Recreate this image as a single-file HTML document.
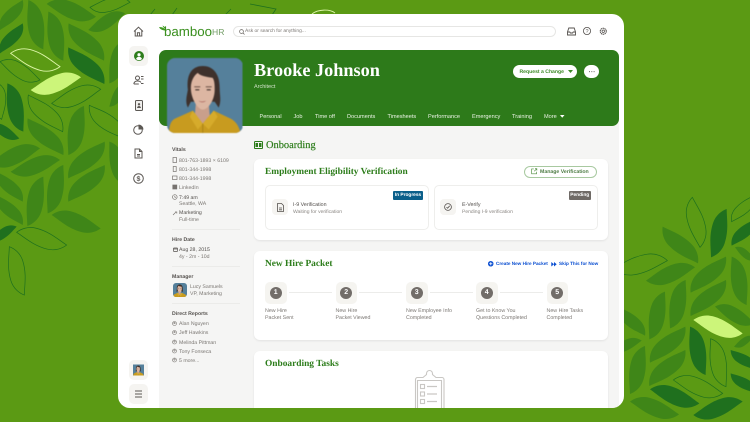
<!DOCTYPE html>
<html lang="en"><head><meta charset="utf-8"><title>BambooHR Onboarding</title>
<style>
html,body{margin:0;padding:0}
body{width:750px;height:422px;overflow:hidden;position:relative;background:#5b9a14;font-family:"Liberation Sans",sans-serif;text-rendering:geometricPrecision}
#w{position:absolute;left:0;top:0;width:750px;height:422px;filter:blur(.25px)}
.a,.t{position:absolute}
.t{white-space:nowrap;height:8px;line-height:8px;font-size:5.2px;color:#7d7975;margin-top:.5px}
.b{font-weight:bold}
.h{color:#55514e;font-weight:bold;font-size:5.2px}
.s{font-family:"Liberation Serif",serif;font-weight:bold;color:#2d7d1b}
.tab{color:#e9f2e3;font-size:5.6px;top:112.5px}
.card{position:absolute;left:254px;width:353.5px;background:#fff;border-radius:6px;box-shadow:0 1px 2px rgba(0,0,0,.08)}
.sub{position:absolute;top:185px;width:162px;height:43px;background:#fff;border:1px solid #eeeeec;border-radius:5px}
.ib{position:absolute;background:#f5f4f1;border-radius:4px}
.step{position:absolute;top:282px;width:21.5px;height:22px;background:#f5f4f0;border-radius:5px}
.step i{position:absolute;left:4.7px;top:5px;width:12px;height:12px;border-radius:50%;background:#726d69;color:#fff;font:bold 7px/12px "Liberation Sans",sans-serif;text-align:center}
.ln{position:absolute;top:292px;height:1px;width:43px;background:#ececea}
.dv{position:absolute;left:172px;width:68px;height:1px;background:#ebebe9}
svg{position:absolute;overflow:visible}
.ic{fill:none;stroke:#5c5854;stroke-width:1}
#f{vector-effect:non-scaling-stroke}
.m{fill:#3f8618}.d{fill:#1f701e}.l{fill:#ccf57a}
.o{fill:none;stroke:#1f701e;stroke-width:.7}
.c{fill:none;stroke:#dcf5a8;stroke-width:.9}
</style></head><body><div id="w">

<svg style="left:0;top:0" width="750" height="422" viewBox="0 0 750 422">
<defs>
<path id="f" d="M0 0C.18-.06.38-.17.65-.17.82-.17.94-.08 1 0 .82.06.62.17.35.17.18.17.06.08 0 0Z"/>
<symbol id="p" viewBox="0 0 76 76">
<rect width="76" height="76" fill="#55809b"/>
<path d="M21 32C19 14 27 8 36 8s17 6 17 22c0 8 2 13-1 20l-4-6-24 0-3 6c-3-6-1-12 0-18Z" fill="#3e312c"/>
<path d="M29 46h13l1 12-7 8-8-8Z" fill="#c99f8b"/>
<path d="M24 30C24 22 28 17 31 15c2 3 9 4 15 5 2 3 2 8 2 12 0 11-7 20-12 20S24 41 24 30Z" fill="#dcb6a2"/>
<path d="M27.5 29h6M39 29h6" stroke="#5a4338" stroke-width=".8"/>
<path d="M28.5 32h4M40 32h4" stroke="#3a2c27" stroke-width="1.2"/>
<path d="M31.5 43c2 1 5 1 8 0-2 2-6 2-8 0Z" fill="#a8605a"/>
<path d="M2 76C2 68 4 63 8 61l18-8 10 13 11-13 17 8c6 3 9 9 10 15Z" fill="#c89b1f"/>
<path d="M26 53l10 13-5 6-8-13ZM47 53 36 66l6 6 9-13Z" fill="#d6ab2b"/>
<path d="M36 66v10" stroke="#9f7a14" stroke-width=".7"/>
</symbol>
</defs>

<g transform="scale(.33333)">
<use href="#f" class="m" transform="matrix(68 -90 -90 -68 0 90)"/>
<use href="#f" class="m" transform="matrix(45 148 148 -45 85 0)"/>
<use href="#f" class="m" transform="matrix(45 147 147 -45 145 35)"/>
<use href="#f" class="m" transform="matrix(148 38 38 -148 140 12)"/>
<use href="#f" class="m" transform="matrix(106 112 -112 106 206 70)"/>
<use href="#f" class="m" transform="matrix(110 -50 50 110 265 90)"/>
<use href="#f" class="d" transform="matrix(68 -90 -90 -68 0 160)"/>
<use href="#f" class="d" transform="matrix(108 110 -110 108 205 142)"/>
<use href="#f" class="c" transform="matrix(148 40 40 -148 32 160)"/>
<use href="#f" class="o" transform="matrix(120 55 55 -120 0 185)"/>
<use href="#f" class="l" transform="matrix(151 -38 38 151 92 270)"/>
<use href="#f" class="o" transform="matrix(147 -42 42 147 155 310)"/>
<use href="#f" class="d" transform="matrix(48 145 145 -48 22 250)"/>
<use href="#f" class="o" transform="matrix(103 110 -110 103 85 285)"/>
<use href="#f" class="o" transform="matrix(105 100 -100 105 268 316)"/>
<use href="#f" class="m" transform="matrix(107 110 -110 107 83 355)"/>
<use href="#f" class="m" transform="matrix(47 -147 147 47 205 465)"/>
<use href="#f" class="m" transform="matrix(109 -110 -110 -109 205 535)"/>
<use href="#f" class="m" transform="matrix(109 -110 -110 -109 205 605)"/>
<use href="#f" class="m" transform="matrix(48 -130 130 48 328 250)"/>
<use href="#f" class="m" transform="matrix(48 130 130 -48 328 425)"/>
<use href="#f" class="m" transform="matrix(50 -70 70 50 328 320)"/>
<use href="#f" class="d" transform="matrix(88 40 40 -88 -30 375)"/>
<use href="#f" class="m" transform="matrix(150 -45 45 150 -30 490)"/>
<use href="#f" class="m" transform="matrix(148 -35 35 148 32 515)"/>
<use href="#f" class="m" transform="matrix(78 90 -90 78 -10 515)"/>
<use href="#f" class="m" transform="matrix(78 90 -90 78 -10 585)"/>
<use href="#f" class="m" transform="matrix(48 -148 148 48 82 678)"/>
<use href="#f" class="m" transform="matrix(47 -145 145 47 143 640)"/>
<use href="#f" class="m" transform="matrix(147 40 40 -147 155 645)"/>
<use href="#f" class="d" transform="matrix(80 -40 40 80 -30 720)"/>
<use href="#f" class="o" transform="matrix(150 38 38 -150 50 697)"/>
<use href="#f" class="o" transform="matrix(45 145 145 -45 28 740)"/>
<use href="#f" class="o" transform="matrix(120 -15 15 120 270 22)"/>
<use href="#f" class="o" transform="matrix(10 108 108 -10 -5 250)"/>
</g>

<g transform="translate(610 150) scale(.33333)">
<use href="#f" class="o" transform="matrix(23 150 -150 23 247 142)"/>
<use href="#f" class="d" transform="matrix(47 -145 145 47 303 322)"/>
<use href="#f" class="o" transform="matrix(70 -80 -80 -70 365 215)"/>
<use href="#f" class="d" transform="matrix(75 -82 -82 -75 365 287)"/>
<use href="#f" class="m" transform="matrix(106 110 -110 106 158 230)"/>
<use href="#f" class="o" transform="matrix(162 -23 23 162 10 355)"/>
<use href="#f" class="m" transform="matrix(147 -40 40 147 108 392)"/>
<use href="#f" class="m" transform="matrix(106 -108 -108 -106 242 428)"/>
<use href="#f" class="m" transform="matrix(106 -108 -108 -106 242 498)"/>
<use href="#f" class="m" transform="matrix(45 145 145 -45 365 320)"/>
<use href="#f" class="m" transform="matrix(47 -145 145 47 180 535)"/>
<use href="#f" class="m" transform="matrix(47 -143 143 47 118 568)"/>
<use href="#f" class="m" transform="matrix(106 -108 -108 -106 120 638)"/>
<use href="#f" class="m" transform="matrix(108 -108 -108 -108 118 708)"/>
<use href="#f" class="m" transform="matrix(80 87 -87 80 25 470)"/>
<use href="#f" class="m" transform="matrix(95 -28 28 95 0 600)"/>
<use href="#f" class="m" transform="matrix(45 -144 144 45 60 732)"/>
<use href="#f" class="m" transform="matrix(120 50 50 -120 315 470)"/>
<use href="#f" class="m" transform="matrix(60 -30 30 60 372 590)"/>
<use href="#f" class="m" transform="matrix(60 38 38 -60 375 292)"/>
<use href="#f" class="l" transform="matrix(148 40 40 -148 250 510)"/>
<use href="#f" class="d" transform="matrix(47 145 145 -47 240 530)"/>
<use href="#f" class="o" transform="matrix(46 144 144 -46 302 566)"/>
<use href="#f" class="d" transform="matrix(80 60 -60 80 362 600)"/>
<use href="#f" class="d" transform="matrix(80 60 -60 80 362 670)"/>
<use href="#f" class="o" transform="matrix(148 40 40 -148 190 690)"/>
<use href="#f" class="d" transform="matrix(148 42 42 -148 120 718)"/>
<use href="#f" class="m" transform="matrix(147 38 38 -147 60 755)"/>
<use href="#f" class="d" transform="matrix(148 -40 40 148 250 795)"/>
</g>
<path d="M250 4 276 9 272 15" fill="none" stroke="#1f701e" stroke-width=".8"/>
<path d="M312 14C318 9 330 9 335 13" fill="none" stroke="#dcf5a8" stroke-width=".9"/>
<path d="M150 15 155 9M172 15 177 8M225 15 231 9" fill="none" stroke="#1f701e" stroke-width=".7"/>
</svg>

<!-- app window -->
<div class="a" style="left:118px;top:13.5px;width:506px;height:394.5px;background:#fff;border-radius:12px;overflow:hidden">
  <div class="a" style="left:41px;top:100px;width:460px;height:295px;background:#f5f5f4"></div>
</div>

<!-- sidebar icons -->
<svg style="left:133px;top:26px" width="11" height="11" viewBox="0 0 11 11" class="ic"><path d="M1 5.5 5.5 1.2 10 5.5M2.2 4.6V10h6.6V4.6M4.4 10V6.8h2.2V10"/></svg>
<div class="ib" style="left:129px;top:46px;width:19px;height:20px;border-radius:5px"></div>
<svg style="left:133.5px;top:51px" width="10" height="10" viewBox="0 0 10 10"><circle cx="5" cy="5" r="5" fill="#2d7d1b"/><circle cx="5" cy="3.7" r="1.6" fill="#fff"/><path d="M2 8c.7-1.6 1.8-2.2 3-2.2S7.3 6.4 8 8a4.3 4.3 0 0 1-6 0Z" fill="#fff"/></svg>
<svg style="left:133px;top:75px" width="11" height="10" viewBox="0 0 11 10" class="ic"><circle cx="4.5" cy="3" r="2"/><path d="M.8 9c.3-2.2 1.8-3 3.7-3s3 .6 3.4 1.5M.8 9h5"/><path d="M8 1.5h2.5M8 4h2.5M8 8.5h2.5" stroke-width="1.1"/></svg>
<svg style="left:134.5px;top:99.5px" width="8" height="11" viewBox="0 0 8 11"><rect x=".5" y=".5" width="7" height="10" rx="1" fill="#f0efed" stroke="#5c5854"/><circle cx="4" cy="4.3" r="1.2" fill="#5c5854"/><path d="M2 8c.3-1.500 1-2 2-2s1.700.5 2 2Z" fill="#5c5854"/></svg>
<svg style="left:133px;top:124px" width="11" height="11" viewBox="0 0 11 11"><circle cx="5" cy="6" r="4.3" fill="none" stroke="#5c5854"/><path d="M5.5 .5a5 5 0 0 1 5 5h-5Z" fill="#5c5854"/></svg>
<svg style="left:134px;top:148px" width="9" height="11" viewBox="0 0 9 11" class="ic"><path d="M1 1h4.5L8 3.5V10H1ZM5.5 1v2.5H8M3 6.5h3M3 8h3"/></svg>
<svg style="left:133px;top:173px" width="11" height="11" viewBox="0 0 11 11"><circle cx="5.5" cy="5.5" r="4.8" fill="none" stroke="#5c5854"/><text x="5.5" y="8" font-size="7" font-weight="bold" text-anchor="middle" fill="#5c5854" font-family="Liberation Sans">$</text></svg>
<div class="ib" style="left:129px;top:360px;width:19px;height:20px;border-radius:5px"></div>
<svg style="left:133px;top:364px;border-radius:2px" width="11" height="12"><use href="#p" width="11" height="12"/></svg>
<div class="ib" style="left:129px;top:384px;width:19px;height:20px;border-radius:5px"></div>
<svg style="left:134px;top:390px" width="9" height="8" viewBox="0 0 9 8"><path d="M1 1h7M1 4h7M1 7h7" stroke="#5c5854" stroke-width="1"/></svg>

<!-- logo -->
<svg style="left:159px;top:25px" width="12" height="10" viewBox="0 0 12 10"><path d="M0 2.2C3 1.800 5.500 3 7 5.500 4.200 5.500 1.500 4.700 0 2.200Z" fill="#3f9a1f"/><path d="M3.500.5C5 1.200 6.300 2.300 7 4.200 5.500 3.500 4 2.300 3.500.5Z" fill="#3f9a1f"/></svg>
<div class="t" style="left:164px;top:25px;height:12px;line-height:12px;font-size:13.3px;color:#3a8f1f">bamboo</div>
<div class="t" style="left:212px;top:27.5px;height:9px;line-height:9px;font-size:8.6px;color:#6f9a62">HR</div>

<!-- search -->
<div class="a" style="left:233px;top:26px;width:323px;height:11px;box-sizing:border-box;border:1px solid #e6e6e4;border-radius:6px;background:#fff"></div>
<svg style="left:238.5px;top:28.5px" width="6" height="6" viewBox="0 0 6 6" fill="none" stroke="#66625e" stroke-width=".7"><circle cx="2.5" cy="2.5" r="1.9"/><path d="M4 4 5.5 5.5"/></svg>
<div class="t" style="left:245px;top:27.5px;font-size:4.9px;color:#7d7975">Ask or search for anything...</div>

<!-- top right icons -->
<svg style="left:567px;top:26.5px" width="9" height="9" viewBox="0 0 9 9" fill="none" stroke="#55514e" stroke-width=".9"><path d="M1.8 1h5.400l1.300 4v3H.5V5ZM.5 5h2.300l.6 1h2.200l.6-1h2.300"/></svg>
<svg style="left:583px;top:27px" width="8" height="8" viewBox="0 0 8 8"><circle cx="4" cy="4" r="3.6" fill="none" stroke="#55514e" stroke-width=".8"/><text x="4" y="6" font-size="5.5" text-anchor="middle" fill="#55514e" font-family="Liberation Sans">?</text></svg>
<svg style="left:599px;top:27px" width="8.5" height="8.5" viewBox="0 0 9 9" fill="none" stroke="#55514e"><circle cx="4.5" cy="4.5" r="1.3" stroke-width=".8"/><circle cx="4.5" cy="4.5" r="3.2" stroke-width="1.1" stroke-dasharray="1.5 .5"/></svg>

<!-- profile header -->
<div class="a" style="left:159px;top:50px;width:460px;height:75.5px;background:#2d7a1a;border-radius:7px"></div>
<svg style="left:167.3px;top:57.7px;border-radius:8px;overflow:hidden;filter:blur(.4px)" width="75.5" height="75.5"><use href="#p" width="75.5" height="75.5"/></svg>
<div class="t s" style="left:254px;top:57.5px;height:24px;line-height:24px;font-size:18.25px;color:#fff">Brooke Johnson</div>
<div class="t" style="left:254px;top:82.5px;font-size:5.5px;color:#d3e3cb">Architect</div>
<div class="a" style="left:513px;top:64.5px;width:64px;height:13px;background:#fff;border-radius:7px"></div>
<div class="t b" style="left:519.5px;top:67px;font-size:5.1px;color:#3c8a26">Request a Change</div>
<svg style="left:568px;top:69.5px" width="5" height="3" viewBox="0 0 5 3"><path d="M0 0h5L2.5 3Z" fill="#3c8a26"/></svg>
<div class="a" style="left:583.5px;top:64.5px;width:15.5px;height:13px;background:#fff;border-radius:7px"></div>
<svg style="left:588.5px;top:70.5px" width="6" height="1.5" viewBox="0 0 6 1.5"><path d="M0 .7h1M2.3 .7h1M4.600 .7h1" stroke="#55514e" stroke-width=".8"/></svg>
<div class="t tab" style="left:259.5px">Personal</div>
<div class="t tab" style="left:293.5px">Job</div>
<div class="t tab" style="left:315px">Time off</div>
<div class="t tab" style="left:347px">Documents</div>
<div class="t tab" style="left:387.5px">Timesheets</div>
<div class="t tab" style="left:428px">Performance</div>
<div class="t tab" style="left:472px">Emergency</div>
<div class="t tab" style="left:512px">Training</div>
<div class="t tab" style="left:544px">More</div>
<svg style="left:560px;top:115px" width="4.5" height="2.7" viewBox="0 0 5 3"><path d="M0 0h5L2.5 3Z" fill="#fff"/></svg>

<!-- left info column -->
<div class="t h" style="left:172px;top:145px">Vitals</div>
<div class="t" style="left:179px;top:156px">801-763-1893 × 6109</div>
<div class="t" style="left:179px;top:165px">801-344-1998</div>
<div class="t" style="left:179px;top:174px">801-344-1998</div>
<div class="t" style="left:179px;top:183.5px">LinkedIn</div>
<div class="t" style="left:179px;top:193px;color:#55514e">7:49 am</div>
<div class="t" style="left:179px;top:199px">Seattle, WA</div>
<div class="t" style="left:179px;top:208.5px;color:#55514e">Marketing</div>
<div class="t" style="left:179px;top:215px">Full-time</div>
<svg style="left:172px;top:157px" width="6" height="70" viewBox="0 0 6 70" fill="none" stroke="#77736f" stroke-width=".7"><rect x="1" y=".5" width="3.5" height="5"/><rect x="1.2" y="9.5" width="3" height="5"/><rect x=".5" y="19" width="4.5" height="3.5"/><rect x=".8" y="28" width="4" height="4" fill="#77736f"/><circle cx="2.8" cy="40" r="2.3"/><path d="M2.8 38.800V40l1 .6M1 58l2.500-2.500M3 55h1.800V56.500"/></svg>

<div class="dv" style="top:229px"></div>
<div class="t h" style="left:172px;top:235px">Hire Date</div>
<div class="t" style="left:179px;top:245px;color:#55514e">Aug 28, 2015</div>
<div class="t" style="left:179px;top:252px">4y - 2m - 10d</div>
<svg style="left:172.5px;top:246.5px" width="5" height="5" viewBox="0 0 5 5" fill="none" stroke="#55514e" stroke-width=".7"><rect x=".5" y="1" width="4" height="3.5" rx=".5"/><path d="M.5 2h4"/></svg>
<div class="dv" style="top:266px"></div>
<div class="t h" style="left:172px;top:272px">Manager</div>
<svg style="left:172.5px;top:282.5px;border-radius:3px;overflow:hidden" width="14" height="14"><use href="#p" width="14" height="14"/></svg>
<div class="t" style="left:190px;top:282px">Lucy Samuels</div>
<div class="t" style="left:190px;top:289px">VP, Marketing</div>
<div class="dv" style="top:303px"></div>
<div class="t h" style="left:172px;top:309px">Direct Reports</div>
<div class="t" style="left:179px;top:319.5px">Alan Nguyen</div>
<div class="t" style="left:179px;top:328.5px">Jeff Hawkins</div>
<div class="t" style="left:179px;top:338px">Melinda Pittman</div>
<div class="t" style="left:179px;top:347px">Tony Fonseca</div>
<div class="t" style="left:179px;top:356px">5 more...</div>
<svg style="left:172px;top:321px" width="5" height="42" viewBox="0 0 5 42" fill="none" stroke="#77736f" stroke-width=".6"><circle cx="2.5" cy="2.5" r="2"/><circle cx="2.5" cy="2" r=".7"/><circle cx="2.5" cy="11.5" r="2"/><circle cx="2.5" cy="11" r=".7"/><circle cx="2.5" cy="21" r="2"/><circle cx="2.5" cy="20.5" r=".7"/><circle cx="2.5" cy="30" r="2"/><circle cx="2.5" cy="29.5" r=".7"/><circle cx="2.5" cy="39" r="2"/><circle cx="2.5" cy="38.5" r=".7"/></svg>

<!-- heading -->
<svg style="left:253.5px;top:141px" width="9" height="8" viewBox="0 0 9 8"><rect x=".5" y=".5" width="8" height="7" rx=".8" fill="none" stroke="#2d7d1b"/><rect x="1.5" y="2" width="2.5" height="4" fill="#2d7d1b"/><rect x="5" y="2" width="2.5" height="4" fill="#2d7d1b"/></svg>
<div class="t s" style="left:266px;top:139px;height:12px;line-height:12px;font-size:10.4px;font-weight:normal;-webkit-text-stroke:.2px #2d7d1b">Onboarding</div>

<!-- card 1 -->
<div class="card" style="top:159px;height:81px"></div>
<div class="t s" style="left:265px;top:165px;height:12px;line-height:12px;font-size:9.4px">Employment Eligibility Verification</div>
<div class="a" style="left:524px;top:165.5px;width:73px;height:12px;box-sizing:border-box;border:1px solid #a8c9a0;border-radius:6px;background:#fff"></div>
<svg style="left:530.5px;top:168px" width="6.5" height="6.5" viewBox="0 0 7 7" fill="none" stroke="#4d8c3c" stroke-width=".7"><path d="M3 1H.7v5.300H6V4M3.500 3.500 6.300.7M4.300.7h2v2"/></svg>
<div class="t b" style="left:540px;top:167.5px;font-size:5.2px;color:#4f7d46">Manage Verification</div>
<div class="sub" style="left:265px"></div>
<div class="sub" style="left:433.5px"></div>
<div class="ib" style="left:272px;top:199px;width:16px;height:16px"></div>
<div class="ib" style="left:440px;top:199px;width:16px;height:16px"></div>
<svg style="left:276.5px;top:202.5px" width="7" height="9" viewBox="0 0 7 9" fill="none" stroke="#55514e" stroke-width=".8"><path d="M.5.5h4L6.5 2.500v6h-6ZM2 5h3M2 6.800h3"/></svg>
<svg style="left:444px;top:203px" width="8" height="8" viewBox="0 0 8 8" fill="none" stroke="#55514e" stroke-width=".8"><circle cx="4" cy="4" r="3.4"/><path d="M2.5 4.200l1.100 1L5.700 2.800"/></svg>
<div class="t" style="left:293px;top:200px;font-size:5.3px;color:#55514e">I-9 Verification</div>
<div class="t" style="left:293px;top:207px;font-size:5px;color:#8a8682">Waiting for verification</div>
<div class="t" style="left:462px;top:200px;font-size:5.3px;color:#55514e">E-Verify</div>
<div class="t" style="left:462px;top:207px;font-size:5px;color:#8a8682">Pending I-9 verification</div>
<div class="t b" style="left:393px;top:190.5px;width:30px;height:9px;line-height:10px;background:#0b5f8a;color:#fff;text-align:center;border-radius:1px;font-size:4.8px;overflow:hidden">In Progress</div>
<div class="t b" style="left:568.5px;top:190.5px;width:22.5px;height:9px;line-height:10px;background:#6f6a66;color:#fff;text-align:center;border-radius:1px;font-size:4.8px;overflow:hidden">Pending</div>

<!-- card 2 -->
<div class="card" style="top:251px;height:89px"></div>
<div class="t s" style="left:265px;top:257px;height:12px;line-height:12px;font-size:9.4px">New Hire Packet</div>
<svg style="left:488px;top:261px" width="5.5" height="5.5" viewBox="0 0 6 6"><circle cx="3" cy="3" r="3" fill="#0b4fd1"/><path d="M3 1.300v3.400M1.300 3h3.400" stroke="#fff" stroke-width=".9"/></svg>
<div class="t b" style="left:496px;top:259.5px;font-size:4.65px;color:#0b4fd1">Create New Hire Packet</div>
<svg style="left:550.5px;top:261.5px" width="6" height="4.5" viewBox="0 0 6 5"><path d="M0 0 3 2.500 0 5ZM3 0 6 2.500 3 5Z" fill="#0b4fd1"/></svg>
<div class="t b" style="left:559px;top:259.5px;font-size:4.65px;color:#0b4fd1">Skip This for Now</div>
<div class="ln" style="left:289px"></div><div class="ln" style="left:359px"></div><div class="ln" style="left:429.5px"></div><div class="ln" style="left:500px"></div>
<div class="step" style="left:265px"><i>1</i></div>
<div class="step" style="left:335.5px"><i>2</i></div>
<div class="step" style="left:406px"><i>3</i></div>
<div class="step" style="left:476px"><i>4</i></div>
<div class="step" style="left:546.5px"><i>5</i></div>
<div class="t" style="left:265px;top:306px;font-size:5.3px">New Hire</div>
<div class="t" style="left:265px;top:313.5px;font-size:5.3px">Packet Sent</div>
<div class="t" style="left:335.5px;top:306px;font-size:5.3px">New Hire</div>
<div class="t" style="left:335.5px;top:313.5px;font-size:5.3px">Packet Viewed</div>
<div class="t" style="left:406px;top:306px;font-size:5.3px">New Employee Info</div>
<div class="t" style="left:406px;top:313.5px;font-size:5.3px">Completed</div>
<div class="t" style="left:476px;top:306px;font-size:5.3px">Get to Know You</div>
<div class="t" style="left:476px;top:313.5px;font-size:5.3px">Questions Completed</div>
<div class="t" style="left:546.5px;top:306px;font-size:5.3px">New Hire Tasks</div>
<div class="t" style="left:546.5px;top:313.5px;font-size:5.3px">Completed</div>

<!-- card 3 -->
<div class="a" style="left:254px;top:351px;width:353.5px;height:57px;background:#fff;border-radius:6px 6px 0 0;box-shadow:0 1px 2px rgba(0,0,0,.08);clip-path:inset(-3px -3px 0 -3px)"></div>
<div class="t s" style="left:265px;top:357px;height:12px;line-height:12px;font-size:9.4px">Onboarding Tasks</div>
<svg style="left:414px;top:371px" width="32" height="37" viewBox="0 0 32 37" fill="none" stroke="#c9c7c4" stroke-width="1.1"><path d="M1.5 37V8.500a2 2 0 0 1 2-2H9L12.500 3.500V2.500a3 3 0 0 1 6 0v1L22 6.500h6a2 2 0 0 1 2 2V37"/><path d="M3.500 37V9.500h24V37"/><rect x="6.5" y="13.5" width="4" height="4"/><rect x="6.5" y="21" width="4" height="4"/><rect x="6.5" y="28.5" width="4" height="4"/><path d="M13 15.500h10M13 23h10M13 30.500h10" stroke-width="1.3"/></svg>

</div></body></html>
